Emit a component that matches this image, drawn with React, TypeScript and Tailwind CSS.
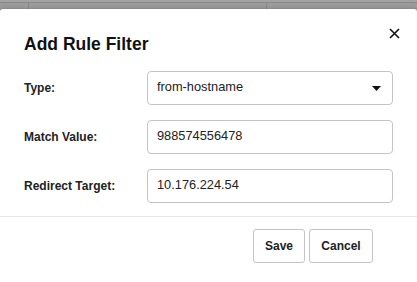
import { useState } from "react";

const rows = [
    { label: "Type:", value: "from-hostname", select: true },
    { label: "Match Value:", value: "988574556478" },
    { label: "Redirect Target:", value: "10.176.224.54" },
];

export default function App() {
    const [open] = useState(true);

    return (
        <div className="w-[417px] h-[282px] bg-[#9b9b9b] overflow-hidden flex flex-col" style={{ fontFamily: '"Liberation Sans", Arial, sans-serif' }}>
            {/* table behind the backdrop */}
            <div className="h-[9px] flex flex-col shrink-0">
                <div className="h-[3px] border-b border-[#8a8a8a] bg-[#a2a2a2]" />
                <div className="flex-1 flex">
                    <div className="w-[29px] border-r border-[#888]" />
                    <div className="w-[238px] border-r border-[#888]" />
                    <div className="flex-1" />
                </div>
            </div>

            {open && (
                <div className="relative flex-1 bg-white rounded-t-[3px] shadow-[0_-1px_3px_rgba(0,0,0,0.15)] flex flex-col">
                    <button className="absolute top-[18px] right-[17px] w-[12px] h-[12px] flex items-center justify-center">
                        <svg width="11" height="11" viewBox="0 0 11 11">
                            <path d="M1 1 L10 10 M10 1 L1 10" stroke="#111" strokeWidth="1.6" />
                        </svg>
                    </button>

                    <h2 className="pt-[25px] pl-[24px] h-[45px] text-[17.5px] leading-[20px] font-bold text-[#111]">
                        Add Rule Filter
                    </h2>

                    {/* form */}
                    <div className="pt-[17px] pb-[13px] flex flex-col gap-[15px]">
                        {rows.map((r) => (
                            <div key={r.label} className="flex items-center h-[34px]">
                                <label className="w-[147px] pl-[24px] text-[12px] font-bold text-[#222]">{r.label}</label>
                                <div className="w-[246px] h-[34px] border border-[#c4c4c4] rounded-[4px] flex items-center justify-between pl-[9px] pr-[11px] text-[12.8px] text-[#222]">
                                    <span className="-mt-[2px]">{r.value}</span>
                                    {r.select && (
                                        <svg width="9" height="5" viewBox="0 0 9 5">
                                            <polygon points="0,0 9,0 4.5,5" fill="#111" />
                                        </svg>
                                    )}
                                </div>
                            </div>
                        ))}
                    </div>

                    <div className="border-t border-[#e6e6e6]" />

                    {/* footer */}
                    <div className="pt-[12px] pr-[44px] flex justify-end gap-[4px]">
                        <button className="w-[52px] h-[34px] border border-[#c4c4c4] rounded-[3px] text-[12px] font-bold text-[#222] bg-white">
                            Save
                        </button>
                        <button className="w-[64px] h-[34px] border border-[#c4c4c4] rounded-[3px] text-[12px] font-bold text-[#222] bg-white">
                            Cancel
                        </button>
                    </div>
                </div>
            )}
        </div>
    );
}
